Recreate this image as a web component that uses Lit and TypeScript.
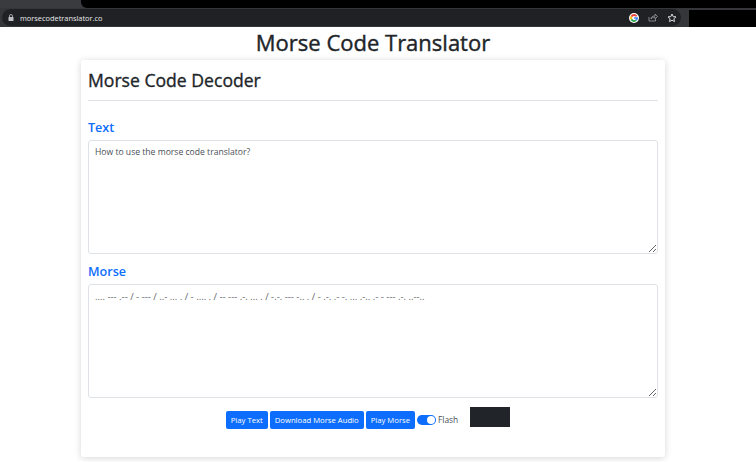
import { LitElement, html, css } from "lit";
import { customElement } from "lit/decorators.js";

const TEXT = "How to use the morse code translator?";
const MORSE = ".... --- .-- / - --- / ..- ... . / - .... . / -- --- .-. ... . / -.-. --- -.. . / - .-. .- -. ... .-.. .- - --- .-. ..--..";

@customElement("app-root")
export class AppRoot extends LitElement {
  static styles = css`
    :host { display: block; width: 756px; height: 462px; overflow: hidden; background: #fff; font-family: "Open Sans", "Noto Sans", sans-serif; color: #212529; }
    * { box-sizing: border-box; }
    .tabs { display: flex; height: 8px; background: #3a3b3e; }
    .tabs .black { margin-left: 81px; flex: 1; background: #000; border-bottom-left-radius: 6px; }
    .toolbar { display: flex; align-items: center; height: 19px; background: #35363a; }
    .omni { margin-left: 2px; width: 679px; height: 17px; background: #202124; border-radius: 8.5px; display: flex; align-items: center; padding: 0 4px 0 6px; gap: 6px; color: #e8eaed; font-size: 7.4px; }
    .url { flex: 1; }
    .omni svg { display: block; flex: none; }
    .icons { display: flex; align-items: center; gap: 9px; }
    .redact { margin-left: 8px; flex: 1; height: 17px; margin-top: 2px; background: #000; }
    h1 { margin: 0; height: 33px; padding-right: 10px; line-height: 30px; text-align: center; font-size: 22px; font-weight: 500; color: #212529; -webkit-text-stroke: 0.4px #212529; }
    .card { margin: 0 91px 0 81px; height: 397px; padding: 6px 7px 0; background: #fff; border-radius: 3px; box-shadow: 0 1px 7px rgba(0,0,0,.17); display: flex; flex-direction: column; }
    h2 { margin: 0; height: 35px; border-bottom: 1px solid #dee2e6; font-size: 17.6px; font-weight: 500; line-height: 29px; -webkit-text-stroke: 0.35px #212529; }
    label.h { display: block; color: #0d6efd; font-size: 12.6px; font-weight: 600; line-height: 18px; }
    .l1 { margin-top: 18px; height: 21px; }
    .l2 { margin-top: 9px; height: 22px; }
    .l2 + textarea { margin-top: -1px; }
    textarea { display: block; width: 100%; height: 114px; padding: 4px 6px; margin: 0; border: 1px solid #dee2e6; border-radius: 3px; font: 8.6px/15px "Open Sans", "Noto Sans", sans-serif; color: #495057; resize: vertical; outline: none; background: #fff; }
    textarea.morse { color: #5f6368; font-size: 9.5px; }
    .actions { display: flex; align-items: flex-start; justify-content: center; height: 30px; margin-top: 9px; padding-right: 10px; }
    button { height: 18px; margin: 4px 2px 0 0; padding: 0 5px; border: none; border-radius: 2px; background: #0d6efd; color: #fff; font: 7.7px/18px "Open Sans", "Noto Sans", sans-serif; white-space: nowrap; }
    .switch { position: relative; width: 19px; height: 10px; margin: 8px 0 0 0; border-radius: 5px; background: #0d6efd; }
    .knob { position: absolute; right: 1px; top: 1px; width: 8px; height: 8px; border-radius: 50%; background: #fff; }
    .flash { margin: 5px 0 0 2px; font-size: 8.4px; line-height: 16px; color: #495057; }
    .block { width: 40px; height: 20px; margin-left: 12px; background: #212529; }
  `;

  render() {
    return html`
      <div class="tabs"><div class="black"></div></div>
      <div class="toolbar">
        <div class="omni">
          <svg width="6" height="8" viewBox="0 0 6 8"><path d="M1.500 3V2a1.500 1.500 0 0 1 3 0v1" fill="none" stroke="#bdc1c6" stroke-width=".8"/><rect x=".5" y="3" width="5" height="4" rx=".5" fill="#bdc1c6"/></svg>
          <span class="url">morsecodetranslator.co</span>
          <div class="icons">
            <svg width="10" height="10" viewBox="0 0 10 10">
              <circle cx="5" cy="5" r="5" fill="#fff"/>
              <path d="M8.400 3 A4 4 0 0 0 1.600 3 L3.200 4.200 A2 2 0 0 1 6.700 3.800Z" fill="#ea4335"/>
              <path d="M1.600 3 A4 4 0 0 0 1.600 7 L3.200 5.800 A2 2 0 0 1 3.200 4.200Z" fill="#fbbc05"/>
              <path d="M1.600 7 A4 4 0 0 0 7.800 7.800 L6.400 6.500 A2 2 0 0 1 3.200 5.800Z" fill="#34a853"/>
              <path d="M9 4.200H5V5.800H7.100A2 2 0 0 1 6.400 6.500L7.800 7.800A4 4 0 0 0 9 4.200Z" fill="#4285f4"/>
            </svg>
            <svg width="10" height="9" viewBox="0 0 10 9" fill="none" stroke="#9aa0a6" stroke-width=".8"><path d="M1 4v4h6.500V6"/><path d="M3 6c0-2 1.500-3 4-3V1.200l2.500 2.300L7 5.800V4.200C5 4.200 3.800 4.800 3 6z"/></svg>
            <svg width="10" height="10" viewBox="0 0 10 10" fill="none" stroke="#dadce0" stroke-width="1"><path d="M5 1l1.200 2.600 2.800.3-2.100 1.900.6 2.800L5 7.200 2.500 8.600l.6-2.800L1 3.900l2.800-.3z"/></svg>
          </div>
        </div>
        <div class="redact"></div>
      </div>
      <h1>Morse Code Translator</h1>
      <div class="card">
        <h2>Morse Code Decoder</h2>
        <label class="h l1">Text</label>
        <textarea .value=${TEXT}></textarea>
        <label class="h l2">Morse</label>
        <textarea class="morse" .value=${MORSE}></textarea>
        <div class="actions">
          <button>Play Text</button>
          <button>Download Morse Audio</button>
          <button>Play Morse</button>
          <div class="switch"><div class="knob"></div></div>
          <span class="flash">Flash</span>
          <div class="block"></div>
        </div>
      </div>
    `;
  }
}
